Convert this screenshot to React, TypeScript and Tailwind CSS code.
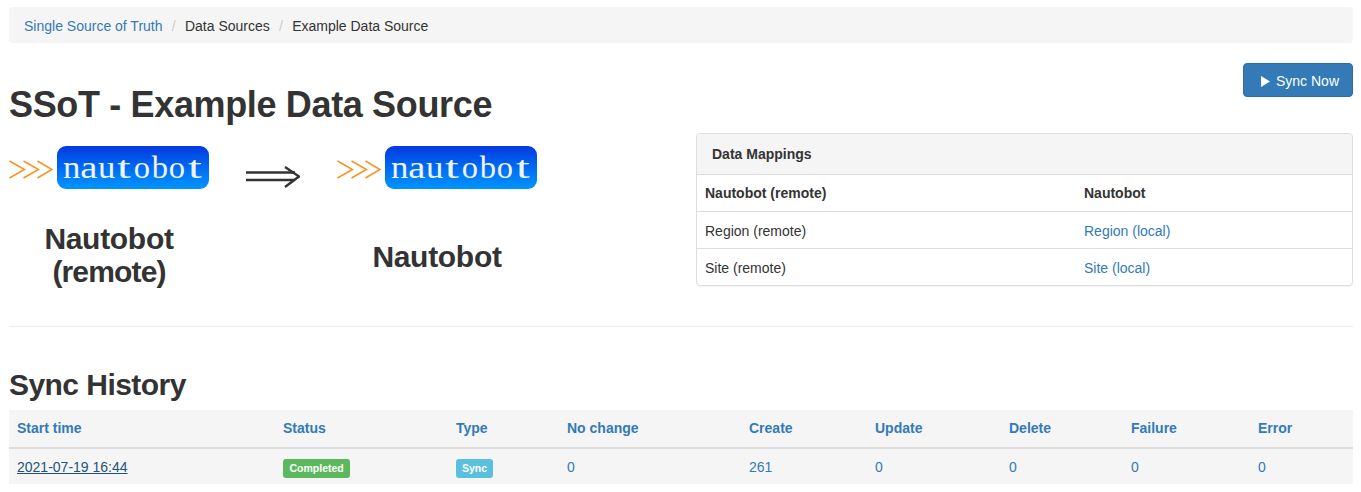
const letters = [
  { c: "n", k: "scale-x-[1.12]" },
  { c: "a", k: "scale-x-[1.25]" },
  { c: "u", k: "scale-x-[1.12]" },
  { c: "t", k: "scale-x-[1.6]" },
  { c: "o", k: "scale-x-[1.05]" },
  { c: "b", k: "scale-x-[1.05]" },
  { c: "o", k: "scale-x-[1.05]" },
  { c: "t", k: "scale-x-[1.6]" },
];

const Logo = () => (
  <div className="flex items-center h-[43px]">
    <svg width="44" height="19" viewBox="0 0 44 19" fill="none" stroke="#f7931e" strokeWidth="1.5" className="shrink-0 block mt-[4px]">
      <path d="M0.5 1 L15.5 9.5 L0.5 18" />
      <path d="M14.5 1 L29.5 9.5 L14.5 18" />
      <path d="M28.5 1 L43 9.5 L28.5 18" />
    </svg>
    <div className="ml-[4px] w-[152px] h-[43px] rounded-[9px] bg-gradient-to-b from-[#0b36e0] to-[#0095ff] flex items-center justify-center text-[#eef3ff] text-[31px] leading-none font-['Liberation_Serif',serif] pb-[1px]">
      {letters.map((l, i) => (
        <span key={i} className={"inline-block w-[17.6px] text-center " + l.k}>{l.c}</span>
      ))}
    </div>
  </div>
);

const Arrow = () => (
  <svg width="54" height="24" viewBox="0 0 54 24" fill="none" stroke="#333" className="block">
    <path d="M0 7.5 H49 M0 15 H49" strokeWidth="2.4" />
    <path d="M39 2 L53 11.5 L39 22" strokeWidth="2.4" />
  </svg>
);

const widths = ["w-[266px]", "w-[173px]", "w-[111px]", "w-[182px]", "w-[126px]", "w-[134px]", "w-[122px]", "w-[127px]", "w-[103px]"];
const heads = ["Start time", "Status", "Type", "No change", "Create", "Update", "Delete", "Failure", "Error"];

export default function App() {
  return (
    <div className="h-[492px] overflow-hidden bg-white pl-[9px] pr-[8px] pt-[7px] text-[14px] leading-[20px] text-[#333] font-['Liberation_Sans',Arial,sans-serif]">
      <nav className="h-[36px] rounded-[4px] bg-[#f5f5f5] px-[15px] pt-[2px] flex items-center">
        <a className="text-[#337ab7]">Single Source of Truth</a>
        <span className="text-[#ccc] px-[9.25px]">/</span>
        <span>Data Sources</span>
        <span className="text-[#ccc] px-[9.25px]">/</span>
        <span>Example Data Source</span>
      </nav>

      <div className="flex justify-between h-[90px]">
        <h1 className="mt-[42px] text-[36px] leading-[40px] font-bold tracking-[-0.35px]">SSoT - Example Data Source</h1>
        <button className="mt-[20px] h-[34px] w-[110px] rounded-[4px] bg-[#337ab7] border border-[#2e6da4] text-white flex items-center pl-[17px] pt-[2px] gap-[6px]">
          <svg width="9" height="11" viewBox="0 0 9 11" fill="#fff"><path d="M0 0 L9 5.5 L0 11 Z" /></svg>
          <span>Sync Now</span>
        </button>
      </div>

      <div className="flex justify-between items-start h-[194px] border-b border-[#eee]">
        <div className="flex pt-[13px]">
          <div className="w-[200px]">
            <Logo />
            <div className="mt-[33px] text-center text-[30px] leading-[33px] font-bold tracking-[-0.3px]">
              Nautobot
              <br />
              <span className="tracking-[-0.85px]">(remote)</span>
            </div>
          </div>
          <div className="w-[128px] flex justify-center pt-[19px]">
            <Arrow />
          </div>
          <div className="w-[200px]">
            <Logo />
            <div className="mt-[51px] text-center text-[30px] leading-[33px] font-bold tracking-[-0.3px]">Nautobot</div>
          </div>
        </div>

        <div className="w-[657px] h-[153px] rounded-[4px] border border-[#ddd] shadow-[0_1px_1px_rgba(0,0,0,0.05)] overflow-hidden">
          <div className="h-[41px] bg-[#f5f5f5] border-b border-[#ddd] px-[15px] flex items-center font-bold">Data Mappings</div>
          <div className="grid grid-cols-[379px_1fr] px-[8px] h-[37px] items-center border-b border-[#ddd] font-bold">
            <span>Nautobot (remote)</span>
            <span>Nautobot</span>
          </div>
          <div className="grid grid-cols-[379px_1fr] px-[8px] pt-[2px] h-[37px] items-center border-b border-[#ddd]">
            <span>Region (remote)</span>
            <a className="text-[#337ab7]">Region (local)</a>
          </div>
          <div className="grid grid-cols-[379px_1fr] px-[8px] pt-[2px] h-[36px] items-center">
            <span>Site (remote)</span>
            <a className="text-[#337ab7]">Site (local)</a>
          </div>
        </div>
      </div>

      <h2 className="mt-[41px] text-[30px] leading-[33px] font-bold tracking-[-0.55px]">Sync History</h2>

      <table className="mt-[9px] w-full table-fixed border-collapse">
        <colgroup>
          {widths.map((w) => (
            <col key={w} className={w} />
          ))}
        </colgroup>
        <thead>
          <tr className="bg-[#f5f5f5] border-b-2 border-[#ddd] h-[38px]">
            {heads.map((h) => (
              <th key={h} className="px-[8px] pb-[2px] text-left font-bold text-[#337ab7]">{h}</th>
            ))}
          </tr>
        </thead>
        <tbody>
          <tr className="bg-[#f5f5f5] h-[36px]">
            <td className="px-[8px]"><a className="text-[#23527c] underline">2021-07-19 16:44</a></td>
            <td className="px-[8px] pt-[2px]">
              <span className="inline-block rounded-[3px] bg-[#5cb85c] text-white text-[10.5px] leading-[11px] font-bold px-[6.5px] py-[4px] align-middle">Completed</span>
            </td>
            <td className="px-[8px] pt-[2px]">
              <span className="inline-block rounded-[3px] bg-[#5bc0de] text-white text-[10.5px] leading-[11px] font-bold px-[6px] py-[4px] align-middle">Sync</span>
            </td>
            <td className="px-[8px] text-[#337ab7]">0</td>
            <td className="px-[8px] text-[#337ab7]">261</td>
            <td className="px-[8px] text-[#337ab7]">0</td>
            <td className="px-[8px] text-[#337ab7]">0</td>
            <td className="px-[8px] text-[#337ab7]">0</td>
            <td className="px-[8px] text-[#337ab7]">0</td>
          </tr>
        </tbody>
      </table>
    </div>
  );
}
